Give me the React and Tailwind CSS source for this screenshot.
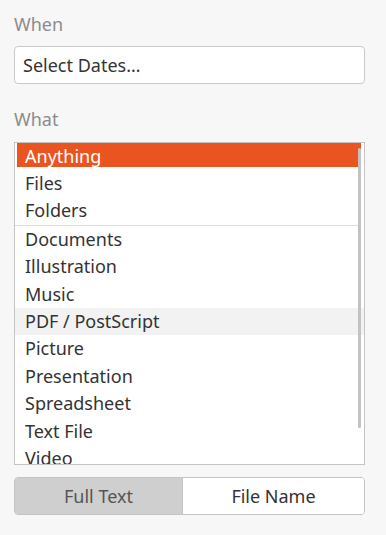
import React from "react";

const items = [
  "Files",
  "Folders",
];
const items2 = [
  "Documents",
  "Illustration",
  "Music",
  "PDF / PostScript",
  "Picture",
  "Presentation",
  "Spreadsheet",
  "Text File",
  "Video",
];

export default function App() {
  return (
    <div
      className="w-[386px] h-[535px] bg-[#f7f7f7] px-[14px] pt-[12px] text-[18px] text-[#333333] overflow-hidden"
      style={{ fontFamily: '"Noto Sans", "Open Sans", sans-serif' }}
    >
      <div className="h-[25px] leading-[25px] text-[#8c8c8c]">When</div>
      <div className="mt-[9px] w-[351px] h-[38px] rounded-[4px] border border-[#c9c9c9] bg-white pl-[8px] leading-[36px] text-[#333333]">
        Select Dates…
      </div>
      <div className="mt-[23px] h-[25px] leading-[25px] text-[#8c8c8c]">What</div>
      <div className="relative mt-[10px] w-[351px] h-[323px] border border-[#c4c4c4] bg-white overflow-hidden">
        <div className="h-[27px] pl-[2px] pr-[3px]">
          <div className="h-[24px] bg-[#e95420] text-white pl-[8px] leading-[26px]">Anything</div>
        </div>
        {items.map((t) => (
          <div key={t} className="h-[27.4px] pl-[10px] leading-[26px]">
            {t}
          </div>
        ))}
        <div className="h-px bg-[#dcdcdc] mr-[3px]" />
        {items2.map((t) => (
          <div
            key={t}
            className={
              "h-[27.4px] pl-[10px] leading-[27px] " +
              (t === "PDF / PostScript" ? "bg-[#f2f2f2]" : "")
            }
          >
            {t}
          </div>
        ))}
        <div className="absolute right-[3px] top-[5px] w-[3px] h-[280px] rounded-full bg-[#c2c2c2]" />
      </div>
      <div className="mt-[12px] w-[351px] h-[38px] flex rounded-[4px] border border-[#c4c4c4] overflow-hidden">
        <div className="w-[168px] bg-[#cfcfcf] text-[#555] flex items-center justify-center border-r border-[#c4c4c4]">
          Full Text
        </div>
        <div className="flex-1 bg-white text-[#333333] flex items-center justify-center">
          File Name
        </div>
      </div>
    </div>
  );
}
